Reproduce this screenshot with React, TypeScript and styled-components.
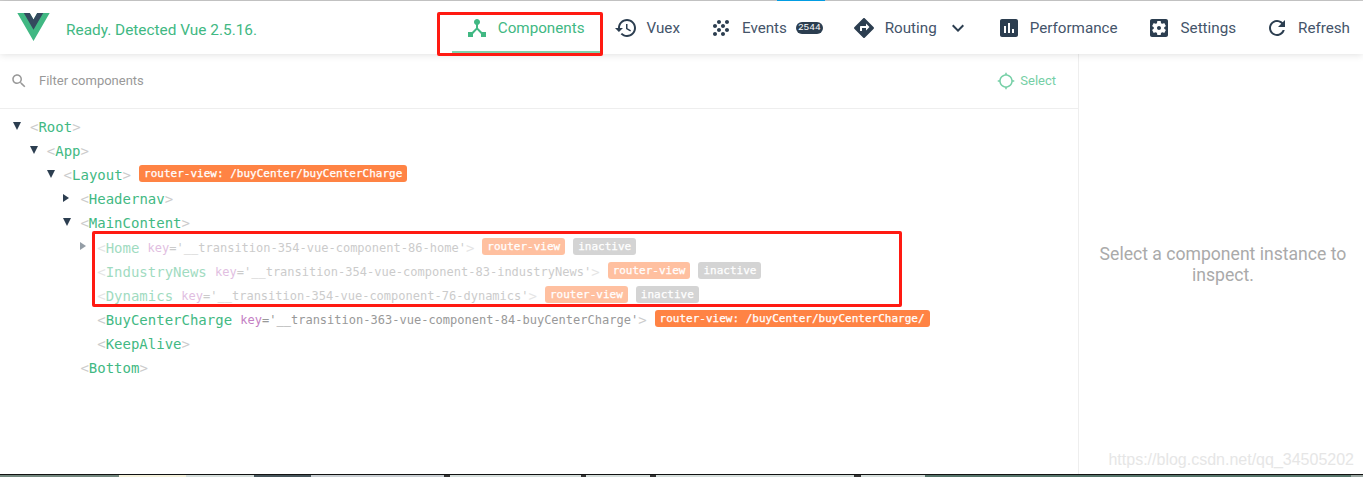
import React from "react";
import styled, { createGlobalStyle } from "styled-components";

const GlobalStyle = createGlobalStyle`
  html, body {
    margin: 0;
    padding: 0;
    background: #fff;
    overflow: hidden;
  }
`;

const green = "#41b883";
const dark = "#2c3e50";

const ICONS: Record<string, string> = {
  hub: "M17 16l-4-4V8.82C14.16 8.4 15 7.3 15 6c0-1.66-1.34-3-3-3S9 4.34 9 6c0 1.3.84 2.4 2 2.82V12l-4 4H3v5h5v-3.05l4-4.2 4 4.2V21h5v-5h-4z",
  history:
    "M13 3c-4.97 0-9 4.03-9 9H1l3.89 3.89.07.14L9 12H6c0-3.87 3.13-7 7-7s7 3.13 7 7-3.13 7-7 7c-1.93 0-3.68-.79-4.94-2.06l-1.42 1.42C8.27 19.99 10.51 21 13 21c4.97 0 9-4.03 9-9s-4.03-9-9-9zm-1 5v5l4.28 2.54.72-1.21-3.5-2.08V8H12z",
  grain:
    "M10 12c-1.1 0-2 .9-2 2s.9 2 2 2 2-.9 2-2-.9-2-2-2zM6 8c-1.1 0-2 .9-2 2s.9 2 2 2 2-.9 2-2-.9-2-2-2zm0 8c-1.1 0-2 .9-2 2s.9 2 2 2 2-.9 2-2-.9-2-2-2zm12-8c1.1 0 2-.9 2-2s-.9-2-2-2-2 .9-2 2 .9 2 2 2zm-4 8c-1.1 0-2 .9-2 2s.9 2 2 2 2-.9 2-2-.9-2-2-2zm4-4c-1.1 0-2 .9-2 2s.9 2 2 2 2-.9 2-2-.9-2-2-2zm-4-4c-1.1 0-2 .9-2 2s.9 2 2 2 2-.9 2-2-.9-2-2-2zm-4-4c-1.1 0-2 .9-2 2s.9 2 2 2 2-.9 2-2-.9-2-2-2z",
  directions:
    "M21.71 11.29l-9-9c-.39-.39-1.02-.39-1.41 0l-9 9c-.39.39-.39 1.02 0 1.41l9 9c.39.39 1.02.39 1.41 0l9-9c.39-.38.39-1.01 0-1.41zM14 14.5V12h-4v3H8v-4c0-.55.45-1 1-1h5V7.5l3.5 3.5-3.5 3.5z",
  chevron: "M7.41 8.59L12 13.17l4.59-4.58L18 10l-6 6-6-6 1.41-1.41z",
  assessment:
    "M19 3H5c-1.1 0-2 .9-2 2v14c0 1.1.9 2 2 2h14c1.1 0 2-.9 2-2V5c0-1.1-.9-2-2-2zM9 17H7v-7h2v7zm4 0h-2V7h2v10zm4 0h-2v-4h2v4z",
  settings:
    "M12 10c-1.1 0-2 .9-2 2s.9 2 2 2 2-.9 2-2-.9-2-2-2zm7-7H5c-1.11 0-2 .9-2 2v14c0 1.1.89 2 2 2h14c1.11 0 2-.9 2-2V5c0-1.1-.89-2-2-2zm-1.75 9c0 .23-.02.46-.05.68l1.48 1.16c.13.11.17.3.08.45l-1.4 2.42c-.09.15-.27.21-.43.15l-1.74-.7c-.36.28-.76.51-1.18.69l-.26 1.85c-.03.17-.18.3-.35.3h-2.8c-.17 0-.32-.13-.35-.29l-.26-1.85c-.43-.18-.82-.41-1.18-.69l-1.74.7c-.16.06-.34 0-.43-.15l-1.4-2.42c-.09-.15-.05-.34.08-.45l1.48-1.16c-.03-.23-.05-.46-.05-.69 0-.23.02-.46.05-.68l-1.48-1.16c-.13-.11-.17-.3-.08-.45l1.4-2.42c.09-.15.27-.21.43-.15l1.74.7c.36-.28.76-.51 1.18-.69l.26-1.85c.03-.17.18-.3.35-.3h2.8c.17 0 .32.13.35.29l.26 1.85c.43.18.82.41 1.18.69l1.74-.7c.16-.06.34 0 .43.15l1.4 2.42c.09.15.05.34-.08.45l-1.48 1.16c.03.23.05.46.05.69z",
  refresh:
    "M17.65 6.35C16.2 4.9 14.21 4 12 4c-4.42 0-7.99 3.58-7.99 8s3.57 8 7.99 8c3.73 0 6.84-2.55 7.73-6h-2.08c-.82 2.33-3.04 4-5.65 4-3.31 0-6-2.69-6-6s2.69-6 6-6c1.66 0 3.14.69 4.22 1.78L13 11h7V4l-2.35 2.35z",
  search:
    "M15.5 14h-.79l-.28-.27C15.41 12.59 16 11.11 16 9.5 16 5.91 13.09 3 9.5 3S3 5.91 3 9.5 5.91 16 9.5 16c1.61 0 3.09-.59 4.23-1.57l.27.28v.79l5 4.99L20.49 19l-4.99-5zm-6 0C7.01 14 5 11.99 5 9.5S7.01 5 9.5 5 14 7.01 14 9.5 11.99 14 9.5 14z",
  target:
    "M20.94 11c-.46-4.17-3.77-7.48-7.94-7.94V1h-2v2.06C6.83 3.52 3.52 6.83 3.06 11H1v2h2.06c.46 4.17 3.77 7.48 7.94 7.94V23h2v-2.06c4.17-.46 7.48-3.77 7.94-7.94H23v-2h-2.06zM12 19c-3.87 0-7-3.13-7-7s3.13-7 7-7 7 3.13 7 7-3.13 7-7 7z",
};

const Icon = ({ name, size = 24 }: { name: string; size?: number }) => (
  <svg width={size} height={size} viewBox="0 0 24 24" fill="currentColor" style={{ flexShrink: 0 }}>
    <path d={ICONS[name]} />
  </svg>
);

const Page = styled.div`
  position: relative;
  width: 1363px;
  height: 477px;
  display: flex;
  flex-direction: column;
  overflow: hidden;
  font-family: Roboto, sans-serif;
  color: ${dark};
`;

const TopStrip = styled.div`
  height: 1px;
  flex: none;
  background: #cfcfcf;
  padding-left: 777px;
  &::before {
    content: "";
    display: block;
    width: 48px;
    height: 1px;
    background: #03a9f4;
  }
`;

const Header = styled.header`
  position: relative;
  z-index: 1;
  height: 53px;
  flex: none;
  display: flex;
  align-items: stretch;
  background: #fff;
  box-shadow: 0 0 8px rgba(0, 0, 0, 0.15);
  padding-left: 17px;
`;

const Logo = styled.svg`
  width: 33px;
  height: 28px;
  align-self: center;
  margin-top: -1px;
`;

const Status = styled.div`
  align-self: center;
  margin: 5px 0 0 16px;
  font-size: 15.4px;
  color: ${green};
`;

const Nav = styled.nav`
  margin-left: auto;
  display: flex;
`;

const NavItem = styled.div<{ $active?: boolean; $gap?: number; $tight?: boolean }>`
  display: flex;
  align-items: center;
  gap: ${(p) => p.$gap ?? 9}px;
  padding: 4px 16px 0 13px;
  margin-right: ${(p) => (p.$tight ? -2 : 0)}px;
  height: 52px;
  box-sizing: border-box;
  font-size: 15.2px;
  color: ${(p) => (p.$active ? green : "#44546a")};
  border-bottom: 2px solid ${(p) => (p.$active ? "#7fd3ad" : "transparent")};
  svg {
    color: ${(p) => (p.$active ? green : dark)};
  }
  &:last-child {
    padding-right: 13px;
  }
`;

const Count = styled.span`
  padding: 0 2px;
  height: 12px;
  line-height: 12px;
  border-radius: 6px;
  background: ${dark};
  color: #fff;
  font-family: "Liberation Mono", monospace;
  font-size: 9.5px;
`;

const Body = styled.main`
  flex: 1;
  min-height: 0;
  display: flex;
`;

const LeftPane = styled.section`
  width: 1078px;
  flex: none;
  border-right: 1px solid #eee;
`;

const FilterBar = styled.div`
  height: 55px;
  box-sizing: border-box;
  border-bottom: 1px solid #eee;
  display: flex;
  align-items: center;
  padding: 0 22px 1px 10px;
  color: #999;
  font-size: 13px;
`;

const FilterLabel = styled.span`
  margin-left: 11px;
`;

const SelectButton = styled.div`
  margin-left: auto;
  display: flex;
  align-items: center;
  gap: 5px;
  font-size: 13px;
  color: #75cfa6;
`;

const Tree = styled.div`
  padding-top: 6px;
  font-family: "DejaVu Sans Mono", monospace;
`;

const Row = styled.div<{ $depth: number; $inactive?: boolean }>`
  height: 24.1px;
  display: flex;
  align-items: center;
  padding-left: ${(p) => 13 + p.$depth * 16.8}px;
  white-space: pre;
  opacity: ${(p) => (p.$inactive ? 0.5 : 1)};
`;

const ArrowSlot = styled.span`
  width: 17px;
  flex: none;
  display: flex;
  align-items: center;
`;

const Arrow = styled.span<{ $open: boolean }>`
  display: block;
  margin-top: -3px;
  ${(p) =>
    p.$open
      ? `border-left: 4.5px solid transparent; border-right: 4.5px solid transparent; border-top: 8px solid ${dark};`
      : `border-top: 4px solid transparent; border-bottom: 4px solid transparent; border-left: 6px solid ${dark};`}
`;

const Angle = styled.span`
  font-size: 14px;
  color: #ccc;
`;

const Name = styled.span`
  font-size: 14px;
  color: #42b983;
`;

const Attr = styled.span`
  margin-left: 1px;
  font-size: 12.02px;
  color: #999;
`;

const AttrKey = styled.span`
  color: #c47fc4;
`;

const Tag = styled.span<{ $muted?: boolean }>`
  height: 17px;
  line-height: 17px;
  padding: 0 5px;
  margin: -3px 0 0 8px;
  border-radius: 3px;
  font-size: 11px;
  color: #fff;
  -webkit-text-stroke: 0.25px #fff;
  background: ${(p) => (p.$muted ? "#aaa" : "#ff8344")};
`;

const RightPane = styled.aside`
  flex: 1;
  display: flex;
  justify-content: center;
  padding: 190px 15px 0 19px;
  box-sizing: border-box;
  font-size: 17.6px;
  line-height: 21px;
  text-align: center;
  color: #aaa;
`;

const TaskStrip = styled.div`
  height: 2px;
  flex: none;
  display: flex;
  border-top: 1px solid #111;
`;

const TaskCell = styled.span<{ $w: number; $c: string }>`
  width: ${(p) => p.$w}px;
  flex: none;
  background: ${(p) => p.$c};
`;

const Highlight = styled.div<{ $x: number; $y: number; $w: number; $h: number }>`
  position: absolute;
  z-index: 2;
  left: ${(p) => p.$x}px;
  top: ${(p) => p.$y}px;
  width: ${(p) => p.$w}px;
  height: ${(p) => p.$h}px;
  box-sizing: border-box;
  border: 3px solid #ff1a12;
  border-radius: 2px;
`;

const Watermark = styled.div`
  position: absolute;
  z-index: 2;
  right: 9px;
  bottom: 8px;
  font-family: "Liberation Sans", Arial, sans-serif;
  font-size: 16px;
  color: #e6e6e6;
`;

type TreeNode = {
  depth: number;
  name: string;
  arrow?: "open" | "closed";
  attr?: string;
  tags?: { text: string; muted?: boolean }[];
  inactive?: boolean;
};

const NODES: TreeNode[] = [
  { depth: 0, name: "Root", arrow: "open" },
  { depth: 1, name: "App", arrow: "open" },
  { depth: 2, name: "Layout", arrow: "open", tags: [{ text: "router-view: /buyCenter/buyCenterCharge" }] },
  { depth: 3, name: "Headernav", arrow: "closed" },
  { depth: 3, name: "MainContent", arrow: "open" },
  {
    depth: 4,
    name: "Home",
    arrow: "closed",
    inactive: true,
    attr: "__transition-354-vue-component-86-home",
    tags: [{ text: "router-view" }, { text: "inactive", muted: true }],
  },
  {
    depth: 4,
    name: "IndustryNews",
    inactive: true,
    attr: "__transition-354-vue-component-83-industryNews",
    tags: [{ text: "router-view" }, { text: "inactive", muted: true }],
  },
  {
    depth: 4,
    name: "Dynamics",
    inactive: true,
    attr: "__transition-354-vue-component-76-dynamics",
    tags: [{ text: "router-view" }, { text: "inactive", muted: true }],
  },
  {
    depth: 4,
    name: "BuyCenterCharge",
    attr: "__transition-363-vue-component-84-buyCenterCharge",
    tags: [{ text: "router-view: /buyCenter/buyCenterCharge/" }],
  },
  { depth: 4, name: "KeepAlive" },
  { depth: 3, name: "Bottom" },
];

const TASKS: [number, string][] = [
  [119, "#74887f"],
  [67, "#f4f1dc"],
  [68, "#d5dedb"],
  [57, "#47565c"],
  [133, "#c8ced2"],
  [6, "#333"],
  [131, "#d5dedb"],
  [5, "#333"],
  [64, "#d5dedb"],
  [6, "#333"],
  [198, "#d5dedb"],
  [7, "#333"],
  [64, "#d5dedb"],
  [426, "#56756b"],
  [12, "#9aa6a2"],
];

export default function App() {
  return (
    <Page>
      <GlobalStyle />
      <TopStrip />
      <Header>
        <Logo viewBox="0 0 261.76 226.69">
          <path d="M161.096.001l-30.225 52.351L100.647.001H-.005l130.877 226.688L261.749.001z" fill="#41b883" />
          <path d="M161.096.001l-30.225 52.351L100.647.001H52.346l78.526 136.01L209.398.001z" fill="#34495e" />
        </Logo>
        <Status>Ready. Detected Vue 2.5.16.</Status>
        <Nav>
          <NavItem $active>
            <Icon name="hub" />
            Components
          </NavItem>
          <NavItem>
            <Icon name="history" />
            Vuex
          </NavItem>
          <NavItem>
            <Icon name="grain" />
            Events
            <Count>2544</Count>
          </NavItem>
          <NavItem $tight>
            <Icon name="directions" />
            Routing
            <Icon name="chevron" />
          </NavItem>
          <NavItem>
            <Icon name="assessment" />
            Performance
          </NavItem>
          <NavItem $gap={10}>
            <Icon name="settings" />
            Settings
          </NavItem>
          <NavItem>
            <Icon name="refresh" />
            Refresh
          </NavItem>
        </Nav>
      </Header>
      <Body>
        <LeftPane>
          <FilterBar>
            <Icon name="search" size={18} />
            <FilterLabel>Filter components</FilterLabel>
            <SelectButton>
              <Icon name="target" size={18} />
              Select
            </SelectButton>
          </FilterBar>
          <Tree>
            {NODES.map((n) => (
              <Row key={n.name} $depth={n.depth} $inactive={n.inactive}>
                <ArrowSlot>{n.arrow && <Arrow $open={n.arrow === "open"} />}</ArrowSlot>
                <Angle>&lt;</Angle>
                <Name>{n.name}</Name>
                {n.attr && (
                  <Attr>
                    {" "}
                    <AttrKey>key</AttrKey>='{n.attr}'
                  </Attr>
                )}
                <Angle>&gt;</Angle>
                {n.tags?.map((t) => (
                  <Tag key={t.text} $muted={t.muted}>
                    {t.text}
                  </Tag>
                ))}
              </Row>
            ))}
          </Tree>
        </LeftPane>
        <RightPane>Select a component instance to inspect.</RightPane>
      </Body>
      <TaskStrip>
        {TASKS.map(([w, c], i) => (
          <TaskCell key={i} $w={w} $c={c} />
        ))}
      </TaskStrip>
      <Highlight $x={437} $y={12} $w={166} $h={44} />
      <Highlight $x={92} $y={231} $w={810} $h={76} />
      <Watermark>https://blog.csdn.net/qq_34505202</Watermark>
    </Page>
  );
}
